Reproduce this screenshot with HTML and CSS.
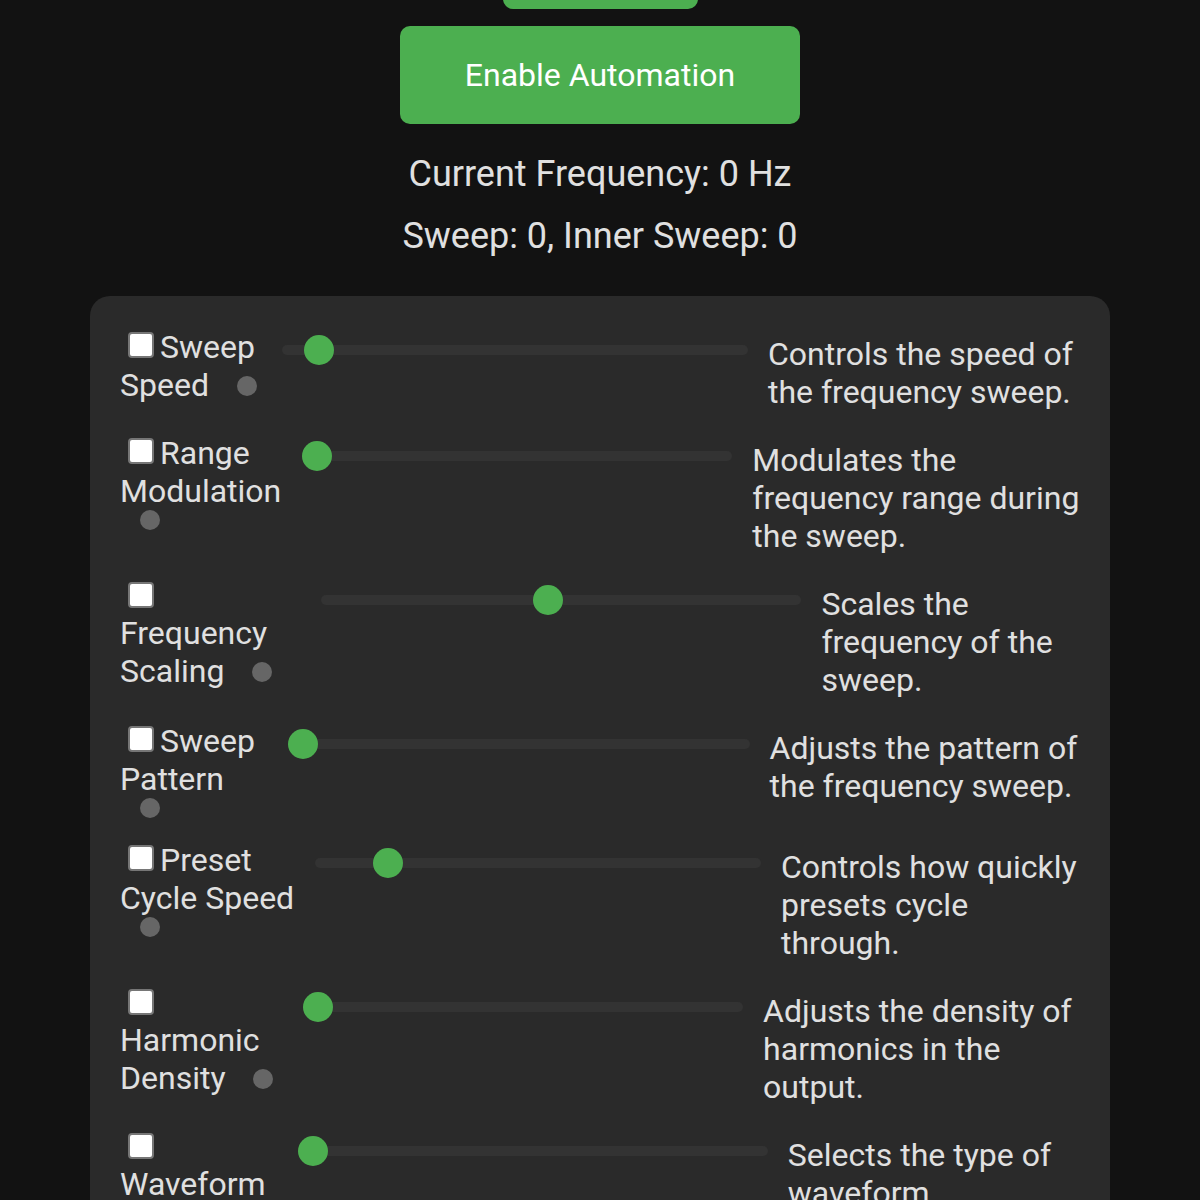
FILE: index.html
```html
<!DOCTYPE html>
<html lang="en">
<head>
    <meta charset="UTF-8">
    <meta name="viewport" content="width=device-width, initial-scale=1.0">
    <title>Frequency Sweep</title>
    <link rel="stylesheet" href="styles.css">
</head>
<body>
    <div class="app">
        <button class="btn btn-start">Start</button>
        <button class="btn btn-automation">Enable Automation</button>
        <p class="readout">Current Frequency: 0 Hz</p>
        <p class="readout readout-sweep">Sweep: 0, Inner Sweep: 0</p>

        <div class="panel">
            <div class="control">
                <label class="control-label"><input type="checkbox"><span class="control-name">Sweep Speed </span><span class="dot"></span></label>
                <input type="range" class="slider" min="0" max="100" value="5">
                <div class="description">Controls the speed of the frequency sweep.</div>
            </div>
            <div class="control">
                <label class="control-label"><input type="checkbox"><span class="control-name">Range Modulation </span><span class="dot"></span></label>
                <input type="range" class="slider" min="0" max="100" value="0">
                <div class="description">Modulates the frequency range during the sweep.</div>
            </div>
            <div class="control">
                <label class="control-label"><input type="checkbox"><span class="control-name">Frequency Scaling </span><span class="dot"></span></label>
                <input type="range" class="slider" min="0" max="100" value="47">
                <div class="description">Scales the frequency of the sweep.</div>
            </div>
            <div class="control">
                <label class="control-label"><input type="checkbox"><span class="control-name">Sweep Pattern </span><span class="dot"></span></label>
                <input type="range" class="slider" min="0" max="100" value="0">
                <div class="description">Adjusts the pattern of the frequency sweep.</div>
            </div>
            <div class="control">
                <label class="control-label"><input type="checkbox"><span class="control-name">Preset Cycle Speed </span><span class="dot"></span></label>
                <input type="range" class="slider" min="0" max="100" value="13.5">
                <div class="description">Controls how quickly presets cycle through.</div>
            </div>
            <div class="control">
                <label class="control-label"><input type="checkbox"><span class="control-name">Harmonic Density </span><span class="dot"></span></label>
                <input type="range" class="slider" min="0" max="100" value="0">
                <div class="description">Adjusts the density of harmonics in the output.</div>
            </div>
            <div class="control">
                <label class="control-label"><input type="checkbox"><span class="control-name">Waveform Type </span><span class="dot"></span></label>
                <input type="range" class="slider" min="0" max="100" value="0">
                <div class="description">Selects the type of waveform generated.</div>
            </div>
        </div>
    </div>
</body>
</html>
```

FILE: styles.css
```css
body {
    margin: 0;
    background-color: #121212;
    color: #e0e0e0;
    font-family: Roboto, "Noto Sans", sans-serif;
    font-size: 32px;
    line-height: 38px;
    text-align: center;
}

/* the page is shown scrolled a little, the start button is cut off */
.app {
    margin-top: -89px;
    padding-bottom: 40px;
}

.btn {
    display: block;
    margin: 0 auto;
    padding: 30px 0;
    border: none;
    border-radius: 10px;
    background-color: #4caf50;
    color: white;
    font: inherit;
    cursor: pointer;
}

.btn-start {
    width: 195px;
}

.btn-automation {
    width: 400px;
    margin-top: 17px;
}

.readout {
    margin: 29px 0 0;
    font-size: 36px;
    line-height: 42px;
}

.readout-sweep {
    margin-top: 20px;
}

.panel {
    margin: 39px 90px 0;
    padding: 30px 30px 30px;
    background-color: #2a2a2a;
    border-radius: 20px;
    text-align: left;
}

.control {
    display: flex;
    align-items: flex-start;
    gap: 20px;
    margin-bottom: 21px;
}

.control-label {
    flex: 0 1 auto;
    font-size: 0;
    line-height: normal;
}

.control-label input[type="checkbox"] {
    -webkit-appearance: none;
    appearance: none;
    width: 26px;
    height: 26px;
    margin: 6px 6px 6px 8px;
    vertical-align: -6px;
    background-color: white;
    border: 2px solid #767676;
    border-radius: 4px;
    box-sizing: border-box;
}

.control-name {
    font-size: 32px;
    line-height: 38px;
}

.dot {
    display: inline-block;
    width: 20px;
    height: 20px;
    margin-left: 20px;
    border-radius: 50%;
    background-color: #666;
}

.slider {
    -webkit-appearance: none;
    appearance: none;
    flex: 0 1 920px;
    height: 10px;
    margin: 19px 0 0;
    border-radius: 5px;
    background: #333;
    outline: none;
}

.slider::-webkit-slider-thumb {
    -webkit-appearance: none;
    appearance: none;
    width: 30px;
    height: 30px;
    border-radius: 50%;
    background: #4caf50;
    border: none;
}

.description {
    flex: 0 1 auto;
    margin-top: 9px;
}
```
